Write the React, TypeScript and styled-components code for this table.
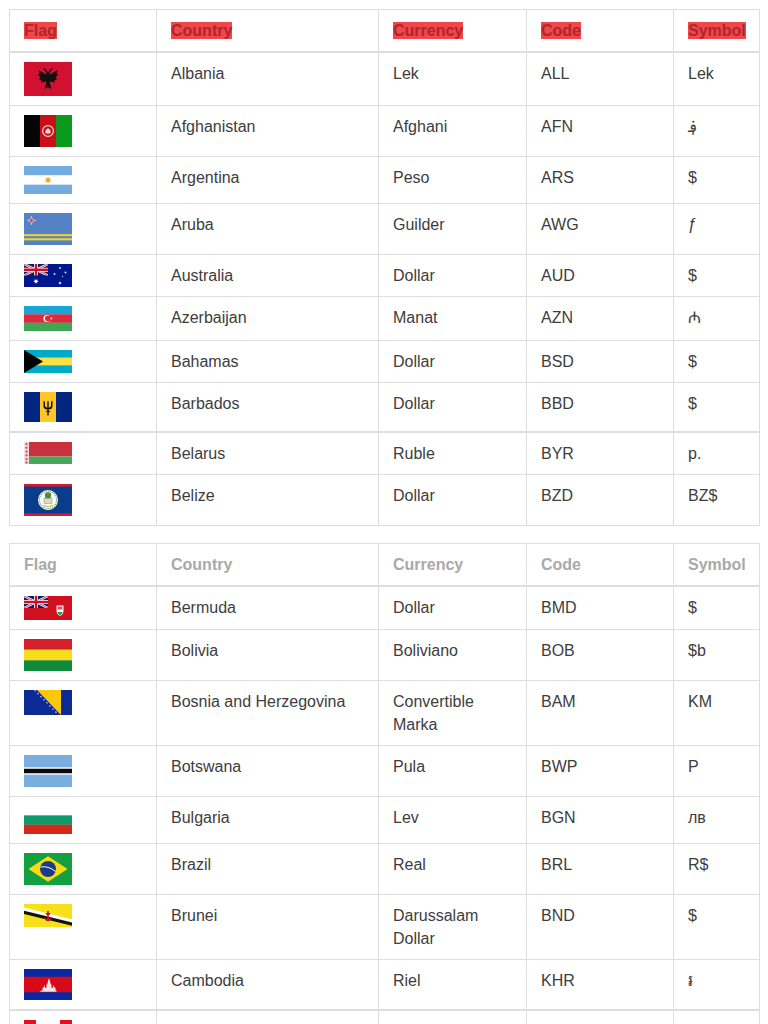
import React from 'react'
import styled, { createGlobalStyle } from 'styled-components'

const GlobalStyle = createGlobalStyle`
    html, body {
        margin: 0;
        padding: 0;
        background: #ffffff;
        overflow: hidden;
    }
    body {
        font-family: "Liberation Sans", Arial, "DejaVu Sans", sans-serif;
    }
`

const Page = styled('div')`
    box-sizing: border-box;
    height: 1024px;
    overflow: hidden;
    padding: 9px 0 0 9px;
    display: flex;
    flex-direction: column;
    gap: 17px;
`

const Table = styled('table')`
    width: 750px;
    border-collapse: collapse;
    table-layout: fixed;
    border: 1px solid #dedede;
    font-size: 16px;
    line-height: 23px;
    color: #3d3d3d;
`

const Col = styled('col')<{ $w: number }>`
    width: ${p => p.$w}px;
`

const HeadCell = styled('th')<{ $marked?: boolean }>`
    text-align: left;
    font-weight: bold;
    padding: 9px 14px 9px;
    border: 1px solid #dedede;
    border-bottom: 2px solid #dedede;
    vertical-align: top;
    white-space: nowrap;
    color: ${p => (p.$marked ? '#b2242b' : '#a9a9a9')};
`

const Mark = styled('span')`
    background: #ef474b;
`

const Row = styled('tr')<{ $split?: boolean }>`
    border-bottom: ${p => (p.$split ? 2 : 1)}px solid #dedede;
`

const Cell = styled('td')`
    padding: 9px 14px;
    border: 1px solid #dedede;
    vertical-align: top;
`

const FlagSvg = styled('svg')`
    display: block;
`

/** Helpers */
const starPts = (cx: number, cy: number, R: number, r: number, n = 5) => {
    const out: string[] = []
    for (let i = 0; i < n * 2; i++) {
        const a = (Math.PI / n) * i - Math.PI / 2
        const rad = i % 2 === 0 ? R : r
        out.push(`${(cx + rad * Math.cos(a)).toFixed(2)},${(cy + rad * Math.sin(a)).toFixed(2)}`)
    }
    return out.join(' ')
}

const UnionJack = ({ w, h }: { w: number; h: number }) => (
    <svg x={0} y={0} width={w} height={h} viewBox="0 0 60 30" preserveAspectRatio="none">
        <rect width="60" height="30" fill="#012169" />
        <path d="M0,0 L60,30 M60,0 L0,30" stroke="#fff" strokeWidth="6" />
        <path d="M0,0 L60,30 M60,0 L0,30" stroke="#C8102E" strokeWidth="2" />
        <path d="M30,0 v30 M0,15 h60" stroke="#fff" strokeWidth="10" />
        <path d="M30,0 v30 M0,15 h60" stroke="#C8102E" strokeWidth="6" />
    </svg>
)

const Stripes = ({ h, colors }: { h: number; colors: string[] }) => (
    <>
        {colors.map((c, i) => (
            <rect key={i} x={0} y={(h / colors.length) * i} width={48} height={h / colors.length + 0.2} fill={c} />
        ))}
    </>
)

const flagArt = (code: string, h: number) => {
    switch (code) {
        case 'AL':
            return (
                <>
                    <rect width={48} height={h} fill="#d2102f" />
                    <g fill="#111">
                        <ellipse cx={24} cy={16.5} rx={2.4} ry={6.5} />
                        <polygon points="22,12.5 14.5,8 15.5,11 14,13 16.5,15 15,17 18,19 16.5,20.5 22,19.5" />
                        <polygon points="26,12.5 33.5,8 32.5,11 34,13 31.5,15 33,17 30,19 31.5,20.5 26,19.5" />
                        <path d="M23,11.5 L20.5,8 L19,7 L20.5,6 L22,7.5 L24,10.5 Z" />
                        <path d="M25,11.5 L27.5,8 L29,7 L27.5,6 L26,7.5 L24,10.5 Z" />
                        <polygon points="22,21.5 26,21.5 27.5,27 24,25.3 20.5,27" />
                    </g>
                </>
            )
        case 'AF':
            return (
                <>
                    <rect x={0} width={16} height={h} fill="#050505" />
                    <rect x={16} width={16} height={h} fill="#c8101a" />
                    <rect x={32} width={16} height={h} fill="#0b9a1d" />
                    <circle cx={24} cy={h / 2} r={5.4} fill="none" stroke="#f2d6d0" strokeWidth={1.2} />
                    <path d="M21.5,18.5 h5 v-3 l-2.5,-2.5 l-2.5,2.5 z" fill="#f2d6d0" />
                </>
            )
        case 'AR':
            return (
                <>
                    <Stripes h={h} colors={['#74acdf', '#ffffff', '#74acdf']} />
                    <circle cx={24} cy={h / 2} r={2.6} fill="#f0b030" />
                </>
            )
        case 'AW':
            return (
                <>
                    <rect width={48} height={h} fill="#5582c6" />
                    <rect y={h * 0.66} width={48} height={h * 0.065} fill="#f3d22a" />
                    <rect y={h * 0.79} width={48} height={h * 0.065} fill="#f3d22a" />
                    <polygon points={starPts(7.5, 7.5, 4.2, 1.2, 4)} fill="#e6283c" stroke="#fff" strokeWidth={0.5} />
                </>
            )
        case 'AU':
            return (
                <>
                    <rect width={48} height={h} fill="#00168c" />
                    <UnionJack w={24} h={h / 2} />
                    <polygon points={starPts(12, 17.3, 2.8, 1.2, 7)} fill="#fff" />
                    <polygon points={starPts(36, 19, 1.7, 0.7, 7)} fill="#fff" />
                    <polygon points={starPts(30.5, 10, 1.5, 0.6, 7)} fill="#fff" />
                    <polygon points={starPts(36, 4, 1.5, 0.6, 7)} fill="#fff" />
                    <polygon points={starPts(41.5, 8.5, 1.5, 0.6, 7)} fill="#fff" />
                    <polygon points={starPts(38.5, 12.5, 0.9, 0.4, 5)} fill="#fff" />
                </>
            )
        case 'AZ':
            return (
                <>
                    <Stripes h={h} colors={['#17a6d6', '#e0283c', '#3fa654']} />
                    <circle cx={23} cy={h / 2} r={3.6} fill="#fff" />
                    <circle cx={24} cy={h / 2} r={3} fill="#e0283c" />
                    <polygon points={starPts(27.4, h / 2, 1.4, 0.6, 8)} fill="#fff" />
                </>
            )
        case 'BS':
            return (
                <>
                    <Stripes h={h} colors={['#00abc9', '#fae042', '#00abc9']} />
                    <polygon points={`0,0 19,${h / 2} 0,${h}`} fill="#000" />
                </>
            )
        case 'BB':
            return (
                <>
                    <rect x={0} width={16} height={h} fill="#00267f" />
                    <rect x={16} width={16} height={h} fill="#ffc726" />
                    <rect x={32} width={16} height={h} fill="#00267f" />
                    <path
                        d="M19.5 8.5 L21 10 V13.5 Q21 15.5 23.3 15.8 V10 L24 8.5 L24.7 10 V15.8 Q27 15.5 27 13.5 V10 L28.5 8.5 V14 Q28.5 17.2 24.7 17.5 V19 H26 V20 H24.7 V23.5 H23.3 V20 H22 V19 H23.3 V17.5 Q19.5 17.2 19.5 14 Z"
                        fill="#111"
                    />
                </>
            )
        case 'BY':
            return (
                <>
                    <rect width={48} height={h * 0.66} fill="#c8313e" />
                    <rect y={h * 0.66} width={48} height={h * 0.34} fill="#4aa657" />
                    <rect width={5} height={h} fill="#f3e3e3" />
                    {Array.from({ length: 6 }).map((_, i) => (
                        <polygon key={i} points={`2.5,${i * 3.7 + 0.6} 4.2,${i * 3.7 + 2.1} 2.5,${i * 3.7 + 3.6} 0.8,${i * 3.7 + 2.1}`} fill="#d06a72" />
                    ))}
                </>
            )
        case 'BZ':
            return (
                <>
                    <rect width={48} height={h} fill="#0a3c8c" />
                    <rect width={48} height={2.6} fill="#d21a34" />
                    <rect y={h - 2.6} width={48} height={2.6} fill="#d21a34" />
                    <circle cx={24} cy={h / 2} r={10} fill="#fff" />
                    <circle cx={24} cy={h / 2} r={8.6} fill="none" stroke="#7aa65a" strokeWidth={1.2} strokeDasharray="1.2 0.8" />
                    <circle cx={24} cy={11.5} r={3.2} fill="#4f8a3a" />
                    <rect x={20} y={14.5} width={8} height={5} fill="#e8d9a8" stroke="#6a8ab0" strokeWidth={0.5} />
                    <path d="M19 21.5 Q24 23.5 29 21.5" stroke="#c9a86a" strokeWidth={1} fill="none" />
                </>
            )
        case 'BM':
            return (
                <>
                    <rect width={48} height={h} fill="#d0101f" />
                    <UnionJack w={24} h={h / 2} />
                    <path d="M32.5 9.5 h7 v5 q0 4 -3.5 5.5 q-3.5 -1.5 -3.5 -5.5 z" fill="#fff" />
                    <rect x={33.5} y={10.5} width={5} height={3} fill="#e05060" />
                    <path d="M33.3 16 h5.4 q-0.6 2.5 -2.7 3.5 q-2.1 -1 -2.7 -3.5 z" fill="#2f9a50" />
                </>
            )
        case 'BO':
            return <Stripes h={h} colors={['#d51f2a', '#f9dd1a', '#0d8a3a']} />
        case 'BA':
            return (
                <>
                    <rect width={48} height={h} fill="#0b2a94" />
                    <polygon points={`13,0 37,0 37,${h}`} fill="#fec80a" />
                    {Array.from({ length: 9 }).map((_, i) => (
                        <polygon key={i} points={starPts(11 + i * 3, 0.5 + i * 3.1, 1.1, 0.45)} fill="#fff" />
                    ))}
                </>
            )
        case 'BW':
            return (
                <>
                    <rect width={48} height={h} fill="#7aaede" />
                    <rect y={h * 0.385} width={48} height={h * 0.23} fill="#fff" />
                    <rect y={h * 0.43} width={48} height={h * 0.14} fill="#0a0a0a" />
                </>
            )
        case 'BG':
            return <Stripes h={h} colors={['#ffffff', '#0f9a6c', '#d62818']} />
        case 'BR':
            return (
                <>
                    <rect width={48} height={h} fill="#14a040" />
                    <polygon points={`4.5,${h / 2} 24,3.2 43.5,${h / 2} 24,${h - 3.2}`} fill="#f8dc10" />
                    <circle cx={24} cy={h / 2} r={8} fill="#1a3a8a" />
                    <path d={`M16.4 ${h / 2 - 2} Q24 ${h / 2 - 3.5} 31.8 ${h / 2 + 2.5}`} stroke="#fff" strokeWidth={1} fill="none" />
                </>
            )
        case 'BN':
            return (
                <>
                    <rect width={48} height={h} fill="#f7e017" />
                    <polygon points="0,3.5 0,6.8 48,18.5 48,15.2" fill="#fff" />
                    <polygon points="0,6.8 0,10 48,21.7 48,18.5" fill="#111" />
                    <path d="M20 13 Q24 17 28 13 L27 15.5 Q24 17.5 21 15.5 Z" fill="#cf1126" />
                    <rect x={23.2} y={7} width={1.6} height={8} fill="#cf1126" />
                    <path d="M21.5 9 h5 l-1 2 h-3 z" fill="#cf1126" />
                    <rect x={22} y={15.5} width={4} height={1.5} fill="#cf1126" />
                </>
            )
        case 'KH':
            return (
                <>
                    <rect width={48} height={h} fill="#0a28a0" />
                    <rect y={h * 0.25} width={48} height={h * 0.5} fill="#d80a1a" />
                    <path
                        d={`M15.5 ${h * 0.73} h17 v-1.2 h-1 v-2.6 h-1 l-0.8 -3 l-0.8 3 h-1.4 v-3 l-1 -1 l-0.6 -3.4 l-0.9 -2 l-0.9 2 l-0.6 3.4 l-1 1 v3 h-1.4 l-0.8 -3 l-0.8 3 h-1 v2.6 h-1 z`}
                        fill="#f6e2e2"
                    />
                </>
            )
        case 'CA':
            return (
                <>
                    <rect width={48} height={h} fill="#fff" />
                    <rect width={12} height={h} fill="#e0121e" />
                    <rect x={36} width={12} height={h} fill="#e0121e" />
                    <polygon points={starPts(24, h / 2, 7, 3.5, 7)} fill="#e0121e" />
                </>
            )
        default:
            return null
    }
}

const Flag = ({ code, h }: { code: string; h: number }) => (
    <FlagSvg width={48} height={h} viewBox={`0 0 48 ${h}`}>
        {flagArt(code, h)}
    </FlagSvg>
)

/** Data */
type Currency = {
    flag: string
    h: number
    country: string
    currency: string
    code: string
    symbol: string
    split?: boolean
}

const firstPage: Currency[] = [
    { flag: 'AL', h: 34, country: 'Albania', currency: 'Lek', code: 'ALL', symbol: 'Lek' },
    { flag: 'AF', h: 32, country: 'Afghanistan', currency: 'Afghani', code: 'AFN', symbol: '؋' },
    { flag: 'AR', h: 28, country: 'Argentina', currency: 'Peso', code: 'ARS', symbol: '$' },
    { flag: 'AW', h: 32, country: 'Aruba', currency: 'Guilder', code: 'AWG', symbol: 'ƒ' },
    { flag: 'AU', h: 23, country: 'Australia', currency: 'Dollar', code: 'AUD', symbol: '$' },
    { flag: 'AZ', h: 25, country: 'Azerbaijan', currency: 'Manat', code: 'AZN', symbol: '₼' },
    { flag: 'BS', h: 23, country: 'Bahamas', currency: 'Dollar', code: 'BSD', symbol: '$' },
    { flag: 'BB', h: 30, country: 'Barbados', currency: 'Dollar', code: 'BBD', symbol: '$', split: true },
    { flag: 'BY', h: 22, country: 'Belarus', currency: 'Ruble', code: 'BYR', symbol: 'p.' },
    { flag: 'BZ', h: 32, country: 'Belize', currency: 'Dollar', code: 'BZD', symbol: 'BZ$' }
]

const secondPage: Currency[] = [
    { flag: 'BM', h: 24, country: 'Bermuda', currency: 'Dollar', code: 'BMD', symbol: '$' },
    { flag: 'BO', h: 32, country: 'Bolivia', currency: 'Boliviano', code: 'BOB', symbol: '$b' },
    { flag: 'BA', h: 25, country: 'Bosnia and Herzegovina', currency: 'Convertible Marka', code: 'BAM', symbol: 'KM' },
    { flag: 'BW', h: 32, country: 'Botswana', currency: 'Pula', code: 'BWP', symbol: 'P' },
    { flag: 'BG', h: 28, country: 'Bulgaria', currency: 'Lev', code: 'BGN', symbol: 'лв' },
    { flag: 'BR', h: 32, country: 'Brazil', currency: 'Real', code: 'BRL', symbol: 'R$' },
    { flag: 'BN', h: 23, country: 'Brunei', currency: 'Darussalam Dollar', code: 'BND', symbol: '$' },
    { flag: 'KH', h: 31, country: 'Cambodia', currency: 'Riel', code: 'KHR', symbol: '៛', split: true },
    { flag: 'CA', h: 24, country: 'Canada', currency: 'Dollar', code: 'CAD', symbol: '$' }
]

const headings = ['Flag', 'Country', 'Currency', 'Code', 'Symbol']
const widths = [147, 222, 148, 147, 86]

const CurrencyTable = ({ rows, marked }: { rows: Currency[]; marked?: boolean }) => (
    <Table>
        <colgroup>
            {widths.map((w, i) => (
                <Col key={i} $w={w} />
            ))}
        </colgroup>
        <thead>
            <tr>
                {headings.map(label => (
                    <HeadCell key={label} $marked={marked}>
                        {marked ? <Mark>{label}</Mark> : label}
                    </HeadCell>
                ))}
            </tr>
        </thead>
        <tbody>
            {rows.map(row => (
                <Row key={row.code} $split={row.split}>
                    <Cell>
                        <Flag code={row.flag} h={row.h} />
                    </Cell>
                    <Cell>{row.country}</Cell>
                    <Cell>{row.currency}</Cell>
                    <Cell>{row.code}</Cell>
                    <Cell>{row.symbol}</Cell>
                </Row>
            ))}
        </tbody>
    </Table>
)

export default function App() {
    return (
        <Page>
            <GlobalStyle />
            <CurrencyTable rows={firstPage} marked />
            <CurrencyTable rows={secondPage} />
        </Page>
    )
}
